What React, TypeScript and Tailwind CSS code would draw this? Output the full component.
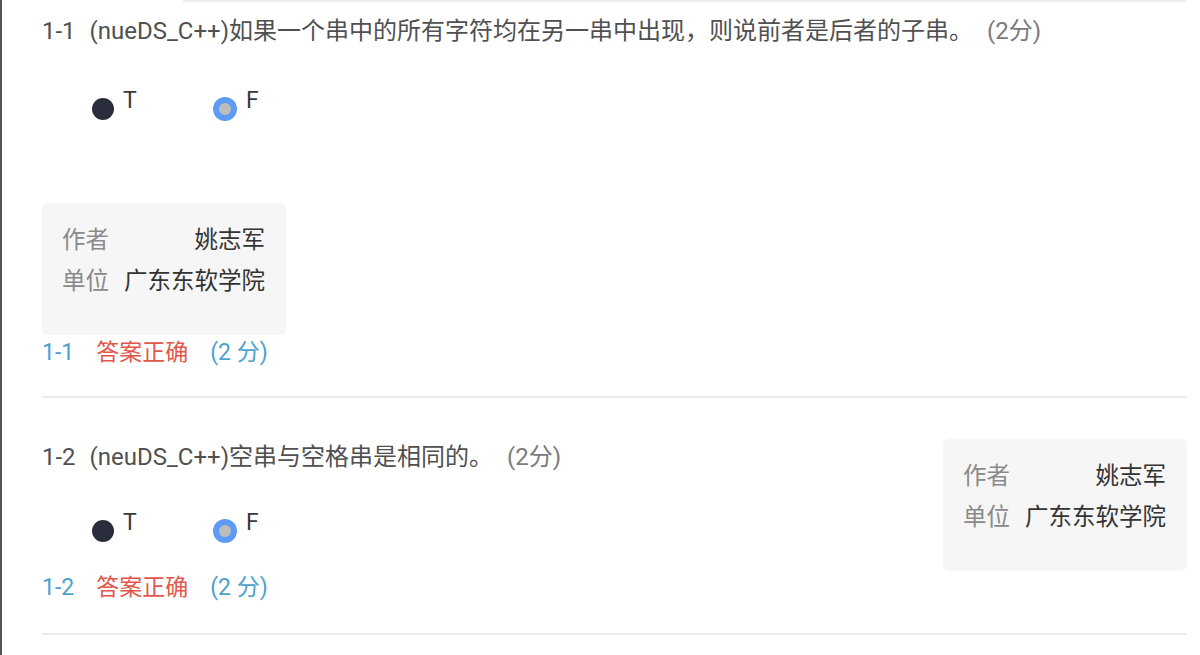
const FONT = { fontFamily: 'Roboto, "Noto Sans CJK SC", "Noto Sans", sans-serif' };

function Radio({ label, checked }: { label: string; checked?: boolean }) {
  return (
    <div className="flex w-[122px] items-start">
      {checked ? (
        <span className="mt-[7px] flex h-[24px] w-[24px] items-center justify-center rounded-full bg-[#5d9bf4]">
          <span className="h-[12px] w-[12px] rounded-full bg-[#bcbcbc]" />
        </span>
      ) : (
        <span className="mt-[8px] ml-[1px] h-[22px] w-[22px] rounded-full bg-[#2a2d3b]" />
      )}
      <span className="ml-[9px] text-[23px] leading-[22px] text-[#3a3a3a]">{label}</span>
    </div>
  );
}

function AuthorBox() {
  return (
    <div className="grid w-[244px] grid-cols-[auto_1fr] rounded-[6px] bg-[#f6f6f6] pt-[17px] pb-[33px] pl-[20px] pr-[21px] text-[23.5px] leading-[41px]">
      <span className="text-[#8a8a8a]">作者</span>
      <span className="text-right text-[#333]">姚志军</span>
      <span className="text-[#8a8a8a]">单位</span>
      <span className="text-right text-[#333]">广东东软学院</span>
    </div>
  );
}

function Result({ no }: { no: string }) {
  return (
    <div className="flex text-[23px] leading-[30px]">
      <span className="text-[#4ca2cc]">{no}</span>
      <span className="ml-[22px] text-[#e2574c]">答案正确</span>
      <span className="ml-[22px] text-[#4ca2cc]">(2 分)</span>
    </div>
  );
}

function Stem({ no, text }: { no: string; text: string }) {
  return (
    <div className="flex text-[24px] leading-[30px] text-[#505050]">
      <span>{no}</span>
      <span className="ml-[14px]">{text}</span>
      <span className="ml-[14px] text-[#7a7a7a]">(2分)</span>
    </div>
  );
}

export default function App() {
  return (
    <div className="min-h-screen border-l-2 border-[#555] bg-white" style={FONT}>
      <div className="ml-[181px] mr-[14px] h-[2px] bg-[#eeeeee]" />
      <div className="pl-[40px] pr-[13px]">
        {/* 1-1 */}
        <div className="pt-[14px]">
          <Stem no="1-1" text="(nueDS_C++)如果一个串中的所有字符均在另一串中出现，则说前者是后者的子串。" />
          <div className="mt-[44px] ml-[49px] flex">
            <Radio label="T" />
            <Radio label="F" checked />
          </div>
          <div className="mt-[82px]">
            <AuthorBox />
          </div>
          <div className="mt-[3px]">
            <Result no="1-1" />
          </div>
          <div className="mt-[28px] h-[2px] bg-[#ececec]" />
        </div>

        {/* 1-2 */}
        <div className="flex justify-between pt-[41px]">
          <div>
            <div className="mt-[3px]">
              <Stem no="1-2" text="(neuDS_C++)空串与空格串是相同的。" />
            </div>
            <div className="mt-[40px] ml-[49px] flex">
              <Radio label="T" />
              <Radio label="F" checked />
            </div>
          </div>
          <AuthorBox />
        </div>
        <div className="mt-[2px]">
          <Result no="1-2" />
        </div>
        <div className="mt-[30px] h-[2px] bg-[#ececec]" />
      </div>
    </div>
  );
}
